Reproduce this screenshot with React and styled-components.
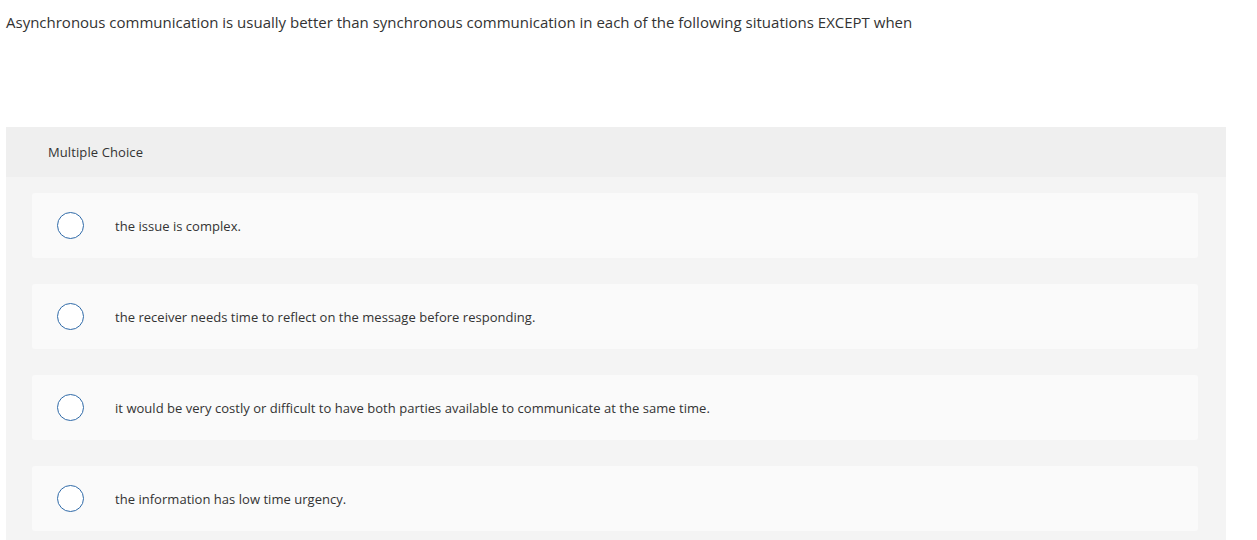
import React from "react";
import styled, { createGlobalStyle } from "styled-components";

const Global = createGlobalStyle`
  html, body { margin: 0; padding: 0; background: #fff; }
  body { font-family: "Open Sans", "Liberation Sans", sans-serif; color: #333; }
`;

const Page = styled.div`
  padding: 0 31px 0 6px;
`;

const Question = styled.p`
  margin: 0;
  padding-top: 12px;
  height: 127px;
  box-sizing: border-box;
  font-size: 15px;
  line-height: 20px;
  color: #333;
`;

const Panel = styled.section`
  background: #f4f4f4;
  border-radius: 2px 2px 0 0;
`;

const Header = styled.div`
  background: #efefef;
  height: 50px;
  display: flex;
  align-items: center;
  padding-left: 42px;
  font-size: 13px;
  letter-spacing: 0.1px;
  color: #333;
`;

const List = styled.div`
  display: flex;
  flex-direction: column;
  gap: 26px;
  padding: 16px 28px 20px 26px;
`;

const Option = styled.label`
  display: flex;
  align-items: center;
  height: 65px;
  background: #fafafa;
  border-radius: 3px;
  padding-left: 25px;
  font-size: 13px;
  letter-spacing: 0.03px;
  color: #333;
`;

const Radio = styled.span`
  width: 25px;
  height: 25px;
  border: 1px solid #2f6aa8;
  border-radius: 50%;
  background: #fff;
  flex: none;
  margin-right: 31px;
`;

const options = [
  "the issue is complex.",
  "the receiver needs time to reflect on the message before responding.",
  "it would be very costly or difficult to have both parties available to communicate at the same time.",
  "the information has low time urgency.",
];

export default function App() {
  return (
    <Page>
      <Global />
      <Question>
        Asynchronous communication is usually better than synchronous communication in each of the following situations EXCEPT when
      </Question>
      <Panel>
        <Header>Multiple Choice</Header>
        <List>
          {options.map((o) => (
            <Option key={o}>
              <Radio />
              {o}
            </Option>
          ))}
        </List>
      </Panel>
    </Page>
  );
}
